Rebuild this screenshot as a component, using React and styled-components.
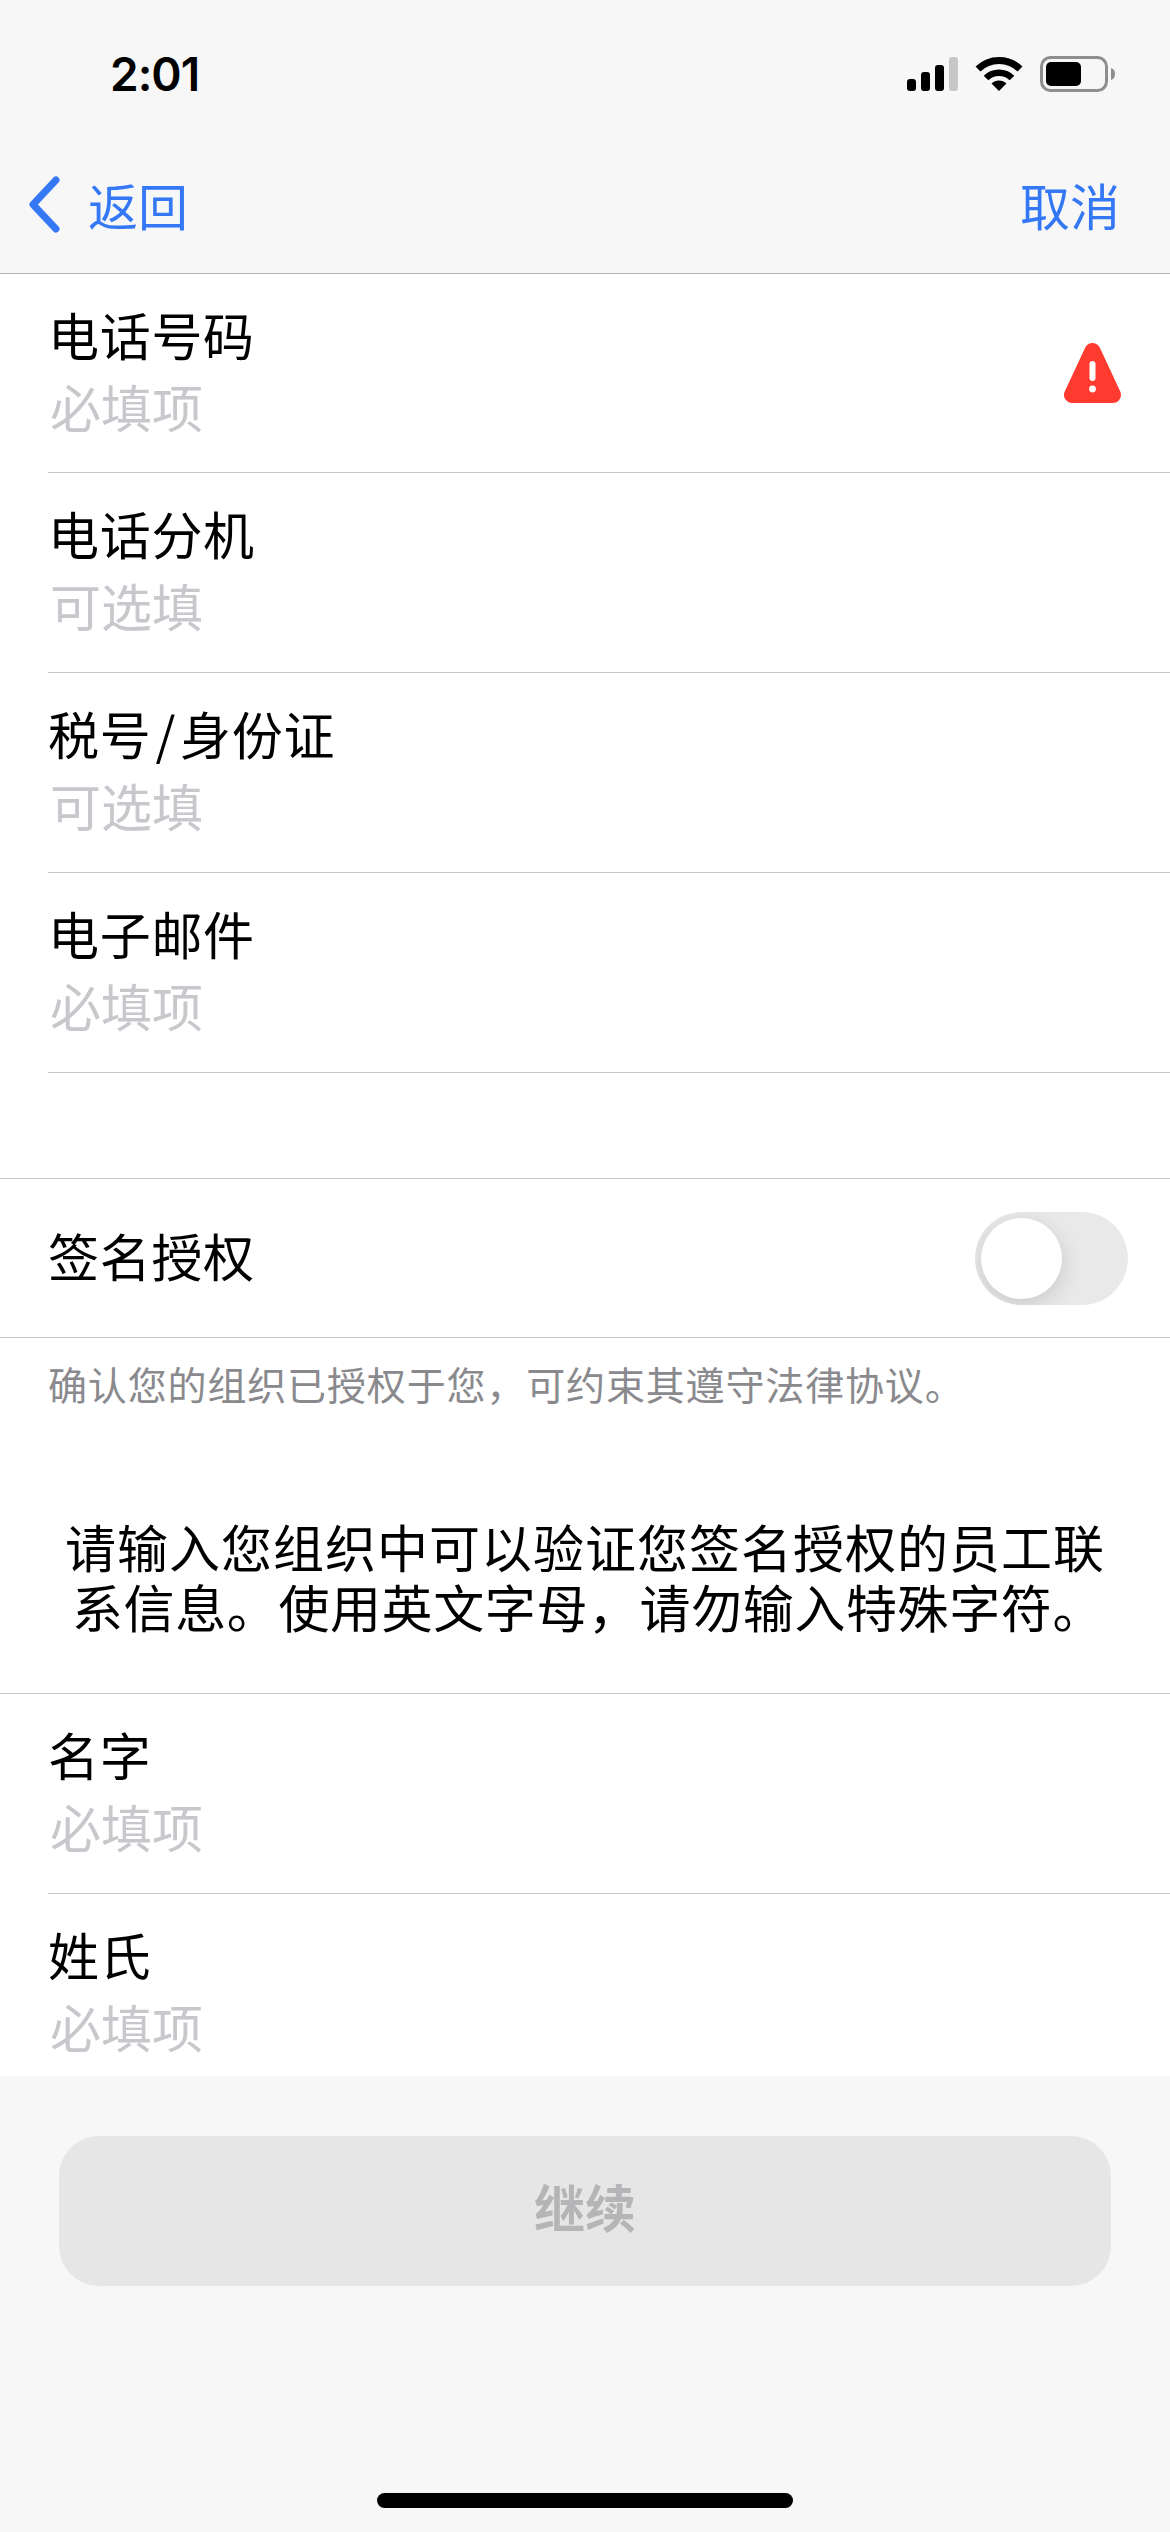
import React from 'react';
import styled, { createGlobalStyle } from 'styled-components';

const GlobalStyle = createGlobalStyle`
  html, body {
    margin: 0;
    padding: 0;
    background: #f7f7f7;
  }
  * {
    box-sizing: border-box;
  }
`;

const Page = styled.div`
  width: 1170px;
  height: 2532px;
  display: flex;
  flex-direction: column;
  overflow: hidden;
  font-family: 'Noto Sans CJK SC', 'Liberation Sans', sans-serif;
  background: #f7f7f7;
`;

const Header = styled.header`
  height: 274px;
  flex-shrink: 0;
  background: #f7f7f7;
  border-bottom: 1px solid #b3b3b3;
`;

const StatusBar = styled.div`
  height: 148px;
  padding: 50px 55px 0 110px;
  display: flex;
  justify-content: space-between;
  align-items: flex-start;
`;

const Time = styled.div`
  font-family: Inter, 'Liberation Sans', sans-serif;
  font-weight: 600;
  font-size: 46px;
  line-height: 48px;
  letter-spacing: -1px;
  color: #000;
`;

const StatusIcons = styled.div`
  display: flex;
  align-items: flex-start;
  gap: 17px;
  margin-top: 5px;
`;

const NavBar = styled.nav`
  height: 125px;
  padding: 0 50px 0 28px;
  display: flex;
  justify-content: space-between;
  align-items: flex-start;
  color: #3478f6;
  font-size: 50px;
  line-height: 60px;
`;

const NavLink = styled.div`
  display: flex;
  align-items: center;
  gap: 28px;
  height: 60px;
  margin-top: 26px;
`;

const Group = styled.section`
  background: #fff;
`;

const FieldRow = styled.div`
  height: ${(p) => (p.$first ? '199px' : p.$last ? '182px' : '200px')};
  margin-left: 48px;
  padding: 24px 49px 0 0;
  display: flex;
  justify-content: space-between;
  border-bottom: ${(p) => (p.$last ? 'none' : '1px solid #c8c8c8')};
`;

const FieldText = styled.div`
  display: flex;
  flex-direction: column;
  font-size: 51px;
  line-height: 72px;
`;

const Label = styled.div`
  color: #000;
  letter-spacing: 0.7px;
`;

const Slash = styled.span`
  margin: 0 4px;
`;

const Placeholder = styled.div`
  margin-left: 2px;
  color: #c7c7cc;
`;

const AlertWrap = styled.div`
  margin-top: 45px;
`;

const Spacer = styled.div`
  height: 106px;
  background: #fff;
  border-bottom: 1px solid #c8c8c8;
`;

const ToggleRow = styled.div`
  height: 159px;
  background: #fff;
  padding: 0 42px 0 48px;
  display: flex;
  align-items: center;
  justify-content: space-between;
  font-size: 51px;
  color: #000;
  border-bottom: 1px solid #c8c8c8;
`;

const ToggleLabel = styled.div`
  margin-bottom: 6px;
  letter-spacing: 0.7px;
`;

const ToggleTrack = styled.div`
  position: relative;
  width: 153px;
  height: 93px;
  border-radius: 47px;
  background: #e9e9e9;
  overflow: hidden;
`;

const ToggleThumb = styled.div`
  position: absolute;
  top: 6px;
  left: 6px;
  width: 81px;
  height: 81px;
  border-radius: 50%;
  background: #fff;
  box-shadow: 0 6px 22px rgba(0, 0, 0, 0.14);
`;

const Hint = styled.div`
  background: #fff;
  padding: 18px 48px 0;
  height: 96px;
  font-size: 39px;
  line-height: 54px;
  letter-spacing: 0.85px;
  color: #8a8a8e;
`;

const Intro = styled.div`
  background: #fff;
  height: 260px;
  padding-top: 82px;
  text-align: center;
  font-size: 51px;
  line-height: 60px;
  color: #000;
  border-bottom: 1px solid #c8c8c8;
`;

const IntroLine = styled.div`
  letter-spacing: ${(p) => (p.$tight ? '0.6px' : '1px')};
  padding-left: ${(p) => (p.$tight ? '6px' : '0')};
`;

const Footer = styled.footer`
  flex: 1;
  display: flex;
  flex-direction: column;
  align-items: center;
  background: #f7f7f7;
  padding-top: 60px;
`;

const ContinueButton = styled.button`
  width: 1052px;
  height: 150px;
  padding: 0 0 10px;
  border: none;
  border-radius: 40px;
  background: #e6e6e6;
  color: #b5b5b7;
  font-family: inherit;
  font-size: 51px;
  font-weight: 700;
`;

const HomeBar = styled.div`
  width: 416px;
  height: 15px;
  margin-top: 207px;
  border-radius: 8px;
  background: #000;
`;

const SignalIcon = () => (
  <svg width="51" height="36" viewBox="0 -2 51 36">
    <rect x="0" y="22" width="9" height="12" rx="3" fill="#000" />
    <rect x="14" y="15" width="9" height="19" rx="3" fill="#000" />
    <rect x="28" y="8" width="9" height="26" rx="3" fill="#000" />
    <rect x="42" y="0" width="9" height="34" rx="3" fill="#c7c7c7" />
  </svg>
);

const WifiIcon = () => (
  <svg width="48" height="36" viewBox="0 0 48 36">
    <path d="M3 14 A30 30 0 0 1 45 14" fill="none" stroke="#000" strokeWidth="7" />
    <path d="M11 23 A18.5 18.5 0 0 1 37 23" fill="none" stroke="#000" strokeWidth="6.5" />
    <path d="M24 36 L16.5 28.5 A10.6 10.6 0 0 1 31.5 28.5 Z" fill="#000" />
  </svg>
);

const BatteryIcon = () => (
  <svg width="75" height="37" viewBox="0 -1 75 37">
    <rect x="1.5" y="1.5" width="65" height="33" rx="9" fill="none" stroke="#8e8e8e" strokeWidth="3" />
    <rect x="6" y="6" width="35" height="24" rx="5" fill="#000" />
    <path d="M71 12 C74 13 75 15 75 18 C75 21 74 23 71 24 Z" fill="#8e8e8e" />
  </svg>
);

const BackChevron = () => (
  <svg width="32" height="57" viewBox="0 0 32 57">
    <path d="M28 4 L5 28.5 L28 53" fill="none" stroke="#3478f6" strokeWidth="7" strokeLinecap="round" strokeLinejoin="round" />
  </svg>
);

const AlertIcon = () => (
  <svg width="57" height="60" viewBox="0 0 57 60">
    <path d="M28.5 8 L8 52 L49 52 Z" fill="#ff3b30" stroke="#ff3b30" strokeWidth="16" strokeLinejoin="round" />
    <rect x="25.5" y="18" width="6" height="20" rx="3" fill="#fff" />
    <circle cx="28.5" cy="46" r="3.4" fill="#fff" />
  </svg>
);

const Field = ({ label, placeholder, alert, first, last }) => (
  <FieldRow $first={first} $last={last}>
    <FieldText>
      <Label>{label}</Label>
      <Placeholder>{placeholder}</Placeholder>
    </FieldText>
    {alert && (
      <AlertWrap>
        <AlertIcon />
      </AlertWrap>
    )}
  </FieldRow>
);

const App = () => (
  <Page>
    <GlobalStyle />
    <Header>
      <StatusBar>
        <Time>2:01</Time>
        <StatusIcons>
          <SignalIcon />
          <WifiIcon />
          <BatteryIcon />
        </StatusIcons>
      </StatusBar>
      <NavBar>
        <NavLink>
          <BackChevron />
          返回
        </NavLink>
        <NavLink>取消</NavLink>
      </NavBar>
    </Header>
    <Group>
      <Field label="电话号码" placeholder="必填项" alert first />
      <Field label="电话分机" placeholder="可选填" />
      <Field
        label={
          <>
            税号<Slash>/</Slash>身份证
          </>
        }
        placeholder="可选填"
      />
      <Field label="电子邮件" placeholder="必填项" />
    </Group>
    <Spacer />
    <ToggleRow>
      <ToggleLabel>签名授权</ToggleLabel>
      <ToggleTrack>
        <ToggleThumb />
      </ToggleTrack>
    </ToggleRow>
    <Hint>确认您的组织已授权于您，可约束其遵守法律协议。</Hint>
    <Intro>
      <IntroLine>请输入您组织中可以验证您签名授权的员工联</IntroLine>
      <IntroLine $tight>系信息。使用英文字母，请勿输入特殊字符。</IntroLine>
    </Intro>
    <Group>
      <Field label="名字" placeholder="必填项" />
      <Field label="姓氏" placeholder="必填项" last />
    </Group>
    <Footer>
      <ContinueButton>继续</ContinueButton>
      <HomeBar />
    </Footer>
  </Page>
);

export default App;
